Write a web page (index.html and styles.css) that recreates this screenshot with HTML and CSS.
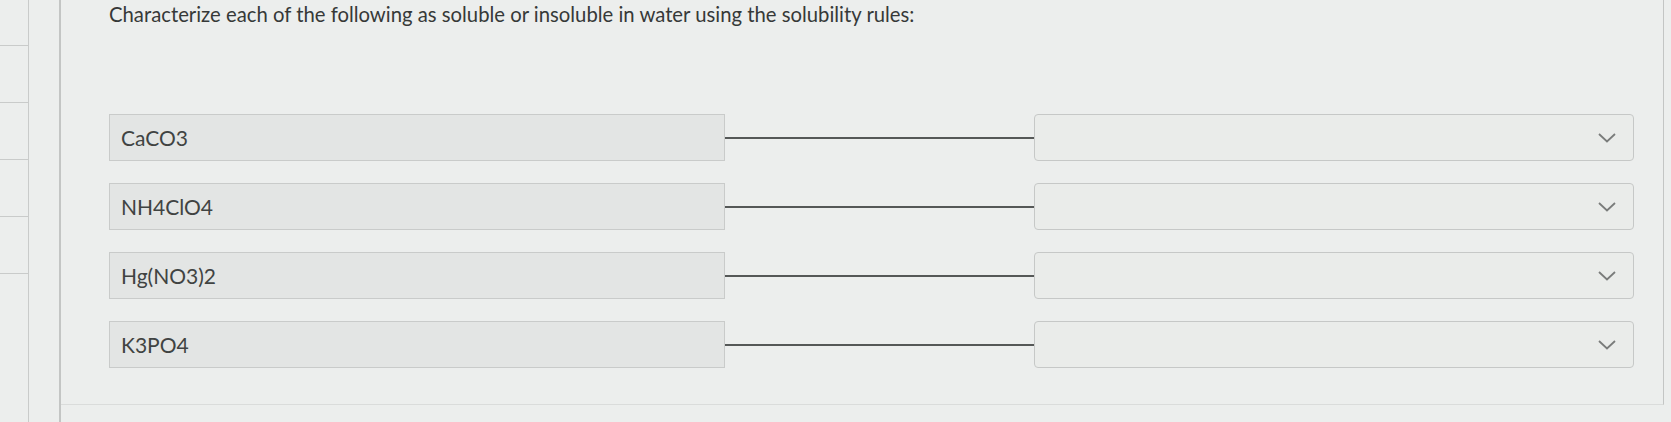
FILE: index.html
```html
<!DOCTYPE html>
<html lang="en">
<head>
    <meta charset="UTF-8">
    <title>Solubility Rules</title>
    <link rel="stylesheet" href="styles.css">
</head>
<body>
    <div class="page">
        <div class="rail">
            <div class="rail-row first"></div>
            <div class="rail-row"></div>
            <div class="rail-row"></div>
            <div class="rail-row"></div>
            <div class="rail-row"></div>
        </div>
        <div class="rail-two"></div>
        <div class="panel">
            <p class="prompt">Characterize each of the following as soluble or insoluble in water using the solubility rules:</p>
            <div class="matches">
                <div class="match-row">
                    <div class="item">CaCO3</div>
                    <div class="connector"></div>
                    <div class="select">
                        <svg class="chevron" width="18" height="10" viewBox="0 0 18 10"><polyline points="1,1 9,8.5 17,1" fill="none" stroke="#7a7c7b" stroke-width="1.8"/></svg>
                    </div>
                </div>
                <div class="match-row">
                    <div class="item">NH4ClO4</div>
                    <div class="connector"></div>
                    <div class="select">
                        <svg class="chevron" width="18" height="10" viewBox="0 0 18 10"><polyline points="1,1 9,8.5 17,1" fill="none" stroke="#7a7c7b" stroke-width="1.8"/></svg>
                    </div>
                </div>
                <div class="match-row">
                    <div class="item">Hg(NO3)2</div>
                    <div class="connector"></div>
                    <div class="select">
                        <svg class="chevron" width="18" height="10" viewBox="0 0 18 10"><polyline points="1,1 9,8.5 17,1" fill="none" stroke="#7a7c7b" stroke-width="1.8"/></svg>
                    </div>
                </div>
                <div class="match-row">
                    <div class="item">K3PO4</div>
                    <div class="connector"></div>
                    <div class="select">
                        <svg class="chevron" width="18" height="10" viewBox="0 0 18 10"><polyline points="1,1 9,8.5 17,1" fill="none" stroke="#7a7c7b" stroke-width="1.8"/></svg>
                    </div>
                </div>
            </div>
        </div>
    </div>
</body>
</html>
```

FILE: styles.css
```css
body {
    margin: 0;
    background-color: #eceeed;
    font-family: Lato, "Open Sans", sans-serif;
    color: #363938;
}

.page {
    display: flex;
    height: 422px;
    padding-right: 7px;
}

.rail {
    width: 28px;
    border-right: 1px solid #c9cbca;
    display: flex;
    flex-direction: column;
}

.rail-row {
    height: 56px;
    border-bottom: 1px solid #c9cbca;
}

.rail-row.first {
    height: 45px;
}

.rail-two {
    width: 30px;
    border-right: 2px solid #c3c5c4;
}

.panel {
    flex: 1;
    height: 404px;
    border-right: 1px solid #c3c5c4;
    border-bottom: 1px solid #dadcdb;
    padding-left: 48px;
}

.prompt {
    margin: 0;
    padding-top: 2px;
    font-size: 20.3px;
    line-height: 24px;
}

.matches {
    display: flex;
    flex-direction: column;
    gap: 22px;
    margin-top: 88px;
}

.match-row {
    display: grid;
    grid-template-columns: 616px 309px 600px;
    align-items: center;
}

.item {
    height: 45px;
    border: 1px solid #c9cbca;
    background-color: #e3e5e4;
    padding-left: 11px;
    display: flex;
    align-items: center;
    font-size: 21px;
    color: #404342;
}

.connector {
    height: 2px;
    background-color: #555857;
}

.select {
    height: 45px;
    border: 1px solid #c6c8c7;
    border-radius: 4px;
    background-color: #eaecea;
    display: flex;
    align-items: center;
    justify-content: flex-end;
    padding-right: 17px;
}
```
